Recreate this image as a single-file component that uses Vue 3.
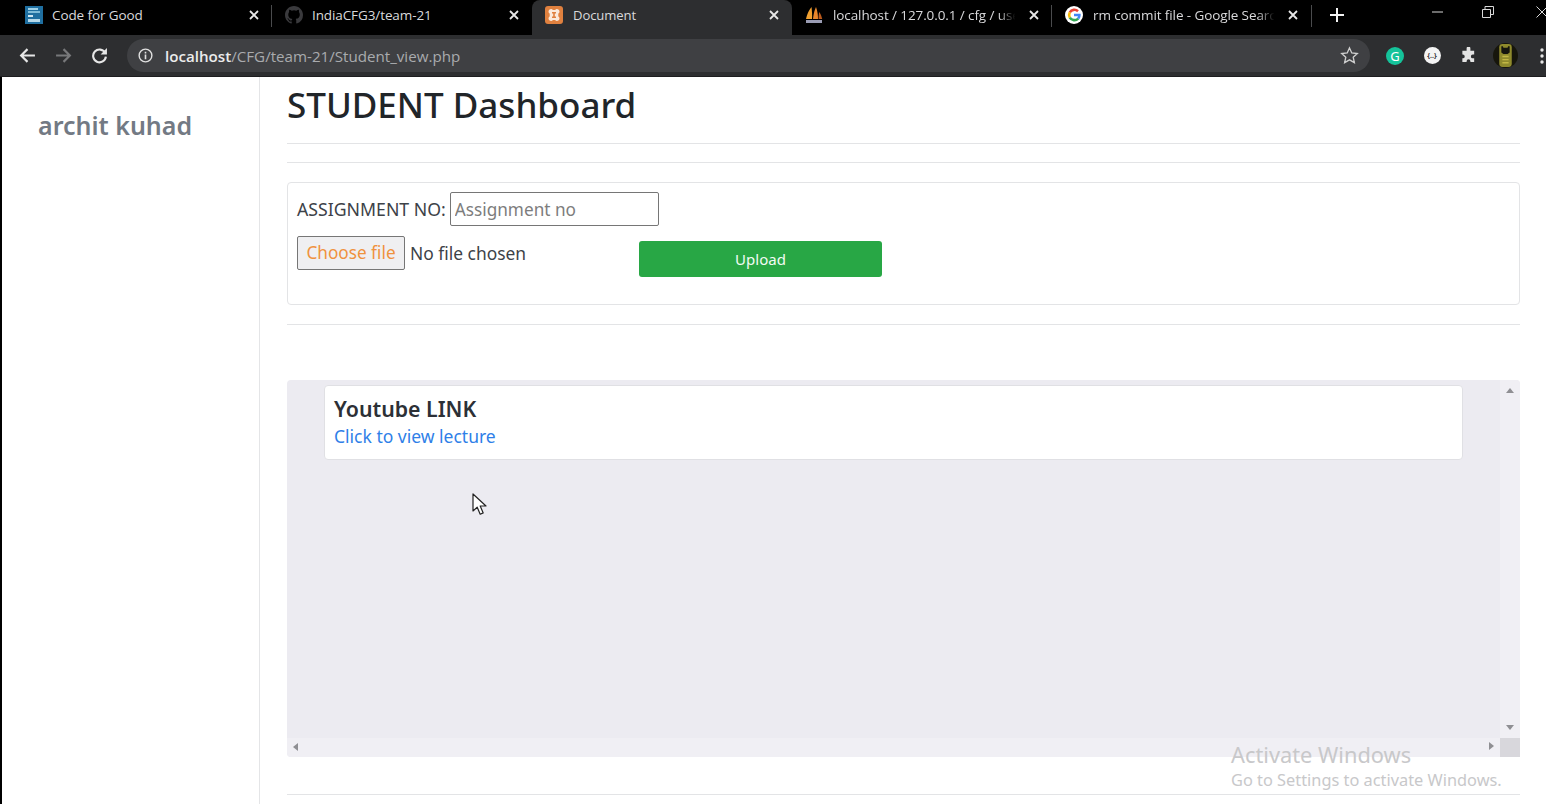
<script setup>
const tabs = [
  { id: 'cfg', title: 'Code for Good' },
  { id: 'gh', title: 'IndiaCFG3/team-21' },
  { id: 'xampp', title: 'Document', active: true },
  { id: 'pma', title: 'localhost / 127.0.0.1 / cfg / users', fade: true },
  { id: 'g', title: 'rm commit file - Google Search', fade: true }
]
</script>

<template>
  <div class="page">
    <header class="tabbar">
      <div v-for="t in tabs" :key="t.id" class="tab" :class="[t.id, { active: t.active }]">
        <svg v-if="t.id === 'cfg'" class="fav" viewBox="0 0 18 18"><rect width="18" height="18" fill="#1f6fa0"/><rect x="3" y="2" width="10" height="2" fill="#9fd0e6"/><rect x="3" y="5" width="12" height="2" fill="#7fbcd8"/><rect x="3" y="9" width="5" height="2" fill="#cfe6f1"/><rect x="3" y="13" width="12" height="3" fill="#b6d8e8"/></svg>
        <svg v-else-if="t.id === 'gh'" class="fav" viewBox="0 0 16 16"><path fill="#3a3a3d" d="M8 0C3.58 0 0 3.58 0 8c0 3.54 2.29 6.53 5.47 7.59.4.07.55-.17.55-.38 0-.19-.01-.82-.01-1.49-2.01.37-2.53-.49-2.69-.94-.09-.23-.48-.94-.82-1.13-.28-.15-.68-.52-.01-.53.63-.01 1.08.58 1.23.82.72 1.21 1.87.87 2.33.66.07-.52.28-.87.51-1.07-1.78-.2-3.64-.89-3.64-3.95 0-.87.31-1.59.82-2.15-.08-.2-.36-1.02.08-2.12 0 0 .67-.21 2.2.82a7.4 7.4 0 0 1 4 0c1.53-1.04 2.2-.82 2.2-.82.44 1.1.16 1.92.08 2.12.51.56.82 1.27.82 2.15 0 3.07-1.87 3.75-3.65 3.95.29.25.54.73.54 1.48 0 1.07-.01 1.93-.01 2.2 0 .21.15.46.55.38A8 8 0 0 0 16 8c0-4.42-3.58-8-8-8z"/></svg>
        <svg v-else-if="t.id === 'xampp'" class="fav" viewBox="0 0 18 18"><rect width="18" height="18" rx="3" fill="#e0813f"/><path fill="#fbeadb" d="M3.500 5.500a2.500 2.500 0 0 1 4.400-1.500h2.200a2.500 2.500 0 0 1 4.400 1.500c0 1-.5 1.700-1.200 2.100v2.800c.7.400 1.200 1.100 1.200 2.100a2.500 2.500 0 0 1-4.400 1.500H7.900a2.500 2.500 0 0 1-4.400-1.500c0-1 .5-1.700 1.200-2.100V7.600c-.7-.4-1.200-1.100-1.200-2.100z"/><path fill="#e0813f" d="M7 6h4v1.600H9.800v2.800H11V12H7v-1.600h1.200V7.600H7z"/></svg>
        <svg v-else-if="t.id === 'pma'" class="fav" viewBox="0 0 18 18"><path fill="#f0a030" d="M1 13C2 8 4 4 6.500 1 7 5 7.300 9 7 13z"/><path fill="#e8862a" d="M8 13C8.500 8 9.500 4 11 1c1.500 4 2 8 2 12z"/><path fill="#b8591c" d="M13.500 13c0-3 .3-5 .7-7 1.400 2 2.500 4.500 3 7z"/><rect x="1" y="14" width="16" height="3" fill="#9a9cb4"/></svg>
        <svg v-else class="fav" viewBox="0 0 18 18"><circle cx="9" cy="9" r="9" fill="#fff"/><path fill="none" stroke="#ea4335" stroke-width="2.600" d="M13 5.200A5.400 5.400 0 0 0 4.800 6.400"/><path fill="none" stroke="#fbbc05" stroke-width="2.600" d="M4.800 6.400a5.400 5.400 0 0 0 0 5.200"/><path fill="none" stroke="#34a853" stroke-width="2.600" d="M4.800 11.600a5.400 5.400 0 0 0 8.400 1"/><path fill="none" stroke="#4285f4" stroke-width="2.600" d="M13.200 12.600A5.400 5.400 0 0 0 14.400 9H9"/></svg>
        <span class="tab-title" :class="{ fade: t.fade }">{{ t.title }}</span>
        <svg class="close" viewBox="0 0 10 10"><path d="M1 1l8 8M9 1l-8 8" stroke="#e8e8e8" stroke-width="1.800"/></svg>
      </div>
      <svg class="plus" viewBox="0 0 14 14"><path d="M7 0v14M0 7h14" stroke="#f2f2f2" stroke-width="2"/></svg>
      <div class="winctl">
        <svg viewBox="0 0 12 12" class="minw"><path d="M0 6h11" stroke="#d8d8d8" stroke-width="1"/></svg>
        <svg viewBox="0 0 12 12" class="maxw"><path d="M.5 3.500h8v8h-8zM3 3.500V.5h8.500v8H8.500" fill="none" stroke="#d8d8d8" stroke-width="1"/></svg>
        <svg viewBox="0 0 12 12" class="clsw"><path d="M.5.5l11 11M11.500.5l-11 11" stroke="#d8d8d8" stroke-width="1"/></svg>
      </div>
    </header>

    <nav class="toolbar">
      <svg class="nav" viewBox="0 0 16 16"><path d="M15 8H2M8 2 2 8l6 6" fill="none" stroke="#e6e6e6" stroke-width="2"/></svg>
      <svg class="nav" viewBox="0 0 16 16"><path d="M1 8h13M8 2l6 6-6 6" fill="none" stroke="#77787a" stroke-width="2"/></svg>
      <svg class="nav" viewBox="0 0 16 16"><path d="M13.300 5.500A6 6 0 1 0 14 9" fill="none" stroke="#e6e6e6" stroke-width="2"/><path d="M15 1v6H9z" fill="#e6e6e6"/></svg>
      <div class="omnibox">
        <svg class="info" viewBox="0 0 16 16"><circle cx="8" cy="8" r="6.800" fill="none" stroke="#e0e0e0" stroke-width="1.500"/><path d="M8 7v5M8 4v1.800" stroke="#e0e0e0" stroke-width="1.700"/></svg>
        <span class="url"><b>localhost</b>/CFG/team-21/Student_view.php</span>
        <svg class="star" viewBox="0 0 20 20"><path d="m10 2 2.400 5.300 5.800.6-4.300 3.900 1.200 5.700L10 14.600l-5.100 2.900 1.200-5.700L1.800 7.900l5.800-.6z" fill="none" stroke="#cfcfcf" stroke-width="1.400"/></svg>
      </div>
      <div class="ext">
        <span class="gram">G</span>
        <span class="white-ext">{..}</span>
        <svg class="puzzle" viewBox="0 0 18 18"><path fill="#e4e4e4" d="M7 1.500a2 2 0 0 1 4 0V4h4v4h-1.500a2 2 0 0 0 0 4H15v4h-4v-1a2 2 0 0 0-4 0v1H2.500v-4H3a2 2 0 0 0 0-4h-.5V4H7z"/></svg>
        <svg class="avatar" viewBox="0 0 24 24"><circle cx="12" cy="12" r="12" fill="#17160c"/><rect x="6" y="1" width="12" height="22" rx="3" fill="#8f8a2c"/><path d="M8 3h1.500l.5 1.500h4L14.500 3H16v6l-2 1.500h-4L8 9z" fill="#15150e"/><path d="M9 13h6M9 16h6M9 19h6" stroke="#c2b845" stroke-width="1.300"/></svg>
        <svg class="dots" viewBox="0 0 4 16"><circle cx="2" cy="2" r="1.700" fill="#e6e6e6"/><circle cx="2" cy="8" r="1.700" fill="#e6e6e6"/><circle cx="2" cy="14" r="1.700" fill="#e6e6e6"/></svg>
      </div>
    </nav>

    <div class="view">
      <aside class="sidebar">
        <h5 class="user">archit kuhad</h5>
      </aside>
      <main class="content">
        <h2 class="title">STUDENT Dashboard</h2>
        <hr class="rule r1" />
        <hr class="rule r2" />
        <section class="card">
          <div class="row-a">
            <label class="lbl">ASSIGNMENT NO:</label>
            <input class="inp" placeholder="Assignment no" />
          </div>
          <div class="row-b">
            <button class="choose">Choose file</button>
            <span class="nofile">No file chosen</span>
            <button class="upload">Upload</button>
          </div>
        </section>
        <hr class="rule r3" />
        <section class="scroller">
          <div class="scroll-main">
            <div class="scroll-body">
              <article class="yt">
                <h5 class="yt-title">Youtube LINK</h5>
                <a class="yt-link" href="#">Click to view lecture</a>
              </article>
            </div>
            <div class="vbar">
              <i class="arr up"></i>
              <i class="arr down"></i>
            </div>
          </div>
          <div class="hbar">
            <i class="arr left"></i>
            <i class="arr right"></i>
            <span class="corner"></span>
          </div>
        </section>
        <hr class="rule r4" />
      </main>
    </div>

    <div class="activate">
      <div class="a1">Activate Windows</div>
      <div class="a2">Go to Settings to activate Windows.</div>
    </div>

    <svg class="cursor" viewBox="0 0 16 24"><path d="M1 1v17l4.200-3.800 3 7 3-1.300-3-6.900h5.800z" fill="#fff" stroke="#222" stroke-width="1.200" stroke-linejoin="round"/></svg>
  </div>
</template>

<style scoped>
.page { position: relative; width: 1546px; height: 804px; overflow: hidden; background: #fff; font-family: "Noto Sans", "Open Sans", sans-serif; color: #343a40; }
.tabbar { height: 35px; background: #000; display: flex; align-items: stretch; padding-left: 13px; box-sizing: border-box; }
.tab { width: 259px; display: flex; align-items: center; padding: 0 13px 5px 12px; box-sizing: border-box; position: relative; flex: none; border-radius: 8px 8px 0 0; }
.tab.gh { width: 260px; padding-left: 13px; }
.tab.xampp { width: 260px; background: #2d2e30; padding-left: 13px; }
.tab.pma { width: 260px; padding-left: 13px; }
.tab.g { width: 260px; padding-left: 13px; padding-right: 14px; }
.tab.cfg::after, .tab.pma::after, .tab.g::after { content: ""; position: absolute; right: 0; top: 5px; height: 22px; width: 1px; background: #4a4b4d; }
.fav { width: 18px; height: 18px; flex: none; margin-right: 9px; }
.tab.xampp .fav, .tab.pma .fav, .tab.g .fav { margin-right: 10px; }
.tab-title { flex: 1; min-width: 0; font-size: 13.500px; color: #d9d9db; white-space: nowrap; overflow: hidden; font-family: "Open Sans", sans-serif; letter-spacing: -.1px; }
.tab.xampp .tab-title { font-size: 13.100px; }
.tab-title.fade { -webkit-mask-image: linear-gradient(90deg, #000 88%, transparent 97%); mask-image: linear-gradient(90deg, #000 88%, transparent 97%); }
.close { width: 10px; height: 10px; flex: none; margin-left: 8px; }
.plus { width: 14px; height: 14px; align-self: center; margin: -5px 0 0 18px; flex: none; }
.winctl { margin-left: auto; display: flex; align-items: flex-start; padding-top: 6px; }
.minw, .maxw, .clsw { width: 12px; height: 12px; flex: none; }
.minw { margin-right: 38px; }
.maxw { margin-right: 42px; }
.clsw { margin-right: -2px; }
.toolbar { height: 42px; background: #2d2e30; border-bottom: 1px solid #1d1d1f; box-sizing: border-box; display: flex; align-items: center; padding: 0 0 0 19px; }
.nav { width: 17px; height: 17px; flex: none; margin-right: 19px; }
.nav:nth-child(3) { margin-right: 17px; }
.omnibox { width: 1243px; height: 33px; background: #3f4043; border-radius: 17px; display: flex; align-items: center; padding: 0 13px 0 11px; box-sizing: border-box; flex: none; margin-left: 2px; }
.info { width: 15px; height: 15px; flex: none; margin-right: 12px; }
.url { font-size: 15.150px; color: #a9abae; flex: 1; font-family: "Open Sans", sans-serif; }
.url b { color: #ececec; font-weight: 600; }
.star { width: 19px; height: 19px; flex: none; margin-right: -2px; }
.ext { display: flex; align-items: center; flex: none; margin-left: 16px; position: relative; }
.gram { width: 18px; height: 18px; border-radius: 50%; background: #15c39a; color: #fff; font-size: 13px; line-height: 18px; text-align: center; flex: none; }
.white-ext { width: 17px; height: 17px; border-radius: 50%; background: #f4f4f4; color: #333; font-size: 7px; line-height: 17px; text-align: center; margin-left: 19.500px; flex: none; font-weight: 700; }
.puzzle { width: 17px; height: 17px; margin-left: 19px; flex: none; }
.avatar { width: 25px; height: 25px; margin-left: 16px; flex: none; }
.dots { width: 4px; height: 16px; margin-left: 22.500px; flex: none; }

.view { display: flex; height: 727px; padding-left: 2px; background: linear-gradient(90deg, #000 2px, #fff 2px); box-sizing: border-box; }
.sidebar { width: 258px; flex: none; border-right: 1px solid #e4e5e7; box-sizing: border-box; padding: 30px 0 0 36px; }
.user { margin: 0; font-size: 25px; line-height: 36px; font-weight: 600; color: #737a84; }
.content { width: 1233px; margin-left: 27px; flex: none; display: flex; flex-direction: column; }
.title { margin: 6px 0 0; font-size: 35px; line-height: 44px; font-weight: 500; color: #212529; white-space: nowrap; }
.rule { border: 0; border-top: 1px solid #e3e4e6; margin: 0; width: 100%; flex: none; }
.r1 { margin-top: 16px; }
.r2 { margin-top: 18px; }
.r3 { margin-top: 19px; }
.r4 { margin-top: 37px; }
.card { margin-top: 19px; height: 123px; border: 1px solid #e3e4e6; border-radius: 4px; box-sizing: border-box; padding: 9px 9px; flex: none; }
.row-a { display: flex; align-items: center; gap: 4px; height: 34px; }
.lbl { font-size: 17.700px; color: #3d4248; white-space: nowrap; }
.inp { width: 209px; height: 34px; box-sizing: border-box; border: 1px solid #767676; border-radius: 2px; padding: 0 4px; font: inherit; font-size: 17.200px; outline: 0; }
.inp::placeholder { color: #7d7d7d; }
.row-b { display: flex; align-items: flex-start; margin-top: 10px; position: relative; }
.choose { width: 108px; height: 34px; box-sizing: border-box; background: #efeff1; border: 1px solid #767676; border-radius: 2px; color: #f0923e; font: inherit; font-size: 17.200px; line-height: 30px; padding: 0; flex: none; }
.nofile { font-size: 17.400px; color: #3d4248; margin-left: 5px; line-height: 34px; width: 229px; flex: none; white-space: nowrap; }
.upload { width: 243px; height: 36px; margin-top: 5px; background: #28a745; color: #f2fbf4; border: 0; border-radius: 3px; font: inherit; font-size: 15px; flex: none; }
.scroller { margin-top: 55px; height: 377px; background: #ecebf1; border-radius: 4px 4px 0 4px; flex: none; display: flex; flex-direction: column; overflow: hidden; }
.scroll-main { flex: 1; display: flex; min-height: 0; }
.scroll-body { flex: 1; padding: 5px 37px 0; }
.vbar { width: 20px; flex: none; background: #f0eff4; position: relative; }
.hbar { height: 19px; flex: none; background: #f0eff4; position: relative; }
.corner { position: absolute; right: 0; top: 0; width: 20px; height: 19px; background: #d8d7dc; }
.arr { position: absolute; width: 0; height: 0; border: 4px solid transparent; }
.arr.up { left: 6px; top: 8px; border-bottom: 5px solid #8f8f93; border-top: 0; }
.arr.down { left: 6px; bottom: 8px; border-top: 5px solid #8f8f93; border-bottom: 0; }
.arr.left { left: 6px; top: 5px; border-right: 5px solid #8f8f93; border-left: 0; }
.arr.right { right: 26px; top: 4px; border-left: 5px solid #8f8f93; border-right: 0; }
.yt { height: 75px; background: #fff; border: 1px solid #e0e0e4; border-radius: 4px; box-sizing: border-box; padding: 9px 9px; }
.yt-title { margin: 0; font-size: 21.300px; line-height: 28px; font-weight: 600; color: #2c3036; }
.yt-link { display: block; font-size: 17.500px; line-height: 26px; color: #2f7fe8; text-decoration: none; }
.activate { position: absolute; left: 1231px; top: 741px; color: #c8c8ca; }
.a1 { font-size: 21.800px; line-height: 28px; white-space: nowrap; }
.a2 { font-size: 16.350px; line-height: 23px; white-space: nowrap; }
.cursor { position: absolute; left: 472px; top: 492px; width: 16px; height: 26px; }
</style>
